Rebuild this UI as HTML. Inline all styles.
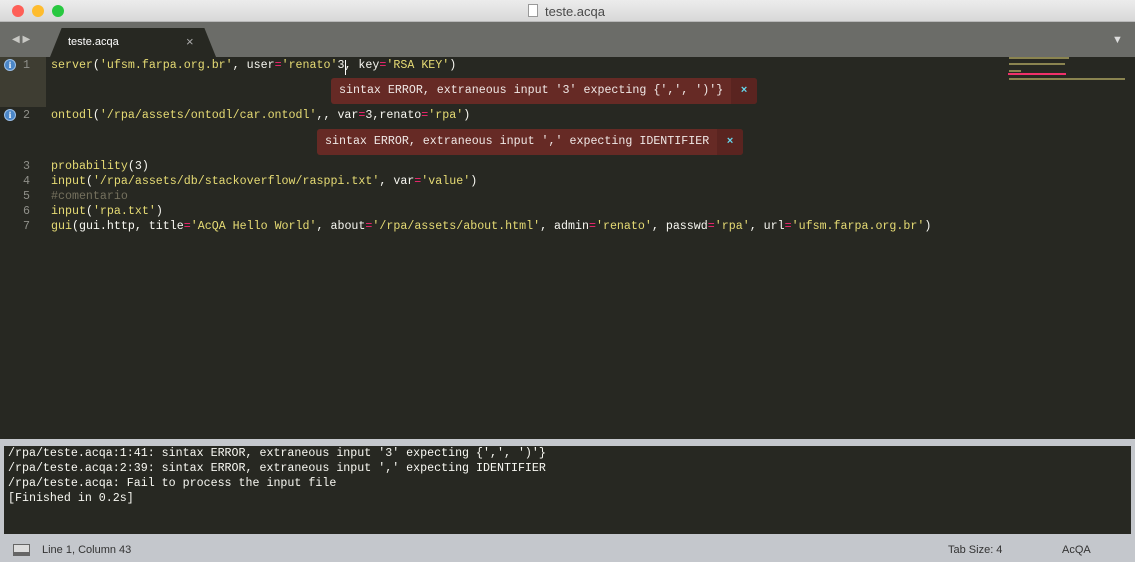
<!DOCTYPE html>
<html><head><meta charset="utf-8"><style>
*{margin:0;padding:0;box-sizing:border-box}
body{width:1135px;height:562px;overflow:hidden;background:#272822;font-family:"Liberation Sans",sans-serif;position:relative}
.mono{font-family:"Liberation Mono",monospace;font-size:11.65px;white-space:pre}
.a{position:absolute}
.y{color:#e6db74}.w{color:#f8f8f2}.p{color:#f92672}.c{color:#75715e}.n{color:#90908a}
.ph{position:absolute;height:26px;background:#662a25;border-radius:3px;color:#f0e8e6;line-height:26px;padding-left:8px}
.ph .x{position:absolute;right:0;top:0;width:26px;height:26px;background:#5a2420;color:#66d9ef;text-align:center;font-weight:bold;font-size:11px;border-radius:0 3px 3px 0}
.info{position:absolute;left:4px;width:12px;height:12px;border-radius:50%;background:#4a86c8;border:1px solid #9cc0e8;color:#fff;font:bold 9px "Liberation Serif",serif;text-align:center;line-height:10px}
</style></head><body>
<div class="a" style="left:0;top:0;width:1135px;height:22px;background:linear-gradient(#ececec,#d8d8d8);border-bottom:1px solid #b8b8b8"></div>
<div class="a" style="left:12px;top:5px;width:12px;height:12px;border-radius:50%;background:#fe5f57"></div>
<div class="a" style="left:32px;top:5px;width:12px;height:12px;border-radius:50%;background:#febc2e"></div>
<div class="a" style="left:52px;top:5px;width:12px;height:12px;border-radius:50%;background:#28c840"></div>
<div class="a" style="left:528px;top:4px;width:10px;height:13px;background:#fff;border:1px solid #999"></div>
<div class="a" style="left:545px;top:4px;font-size:13px;color:#4a4a4a">teste.acqa</div>
<div class="a" style="left:0;top:22px;width:1135px;height:35px;background:#6b6c68"></div>
<div class="a" style="left:12px;top:34px;color:#c8c8c4;font-size:10px">◀ ▶</div>
<div class="a" style="left:50px;top:28px;width:166px;height:29px;background:#272822;clip-path:polygon(7% 0,93% 0,100% 100%,0 100%)"></div>
<div class="a" style="left:68px;top:36px;color:#fff;font-size:11px">teste.acqa</div>
<div class="a" style="left:186px;top:34px;color:#aaa;font-size:13px">×</div>
<div class="a" style="left:1112px;top:34px;color:#ddd;font-size:11px">▼</div>
<div class="a" style="left:0;top:57px;width:46px;height:50px;background:#3e3d32"></div>
<div class="info" style="top:59px">i</div><div class="info" style="top:109px">i</div>
<div class="a mono n" style="left:23px;top:58px;line-height:15px">1</div>
<div class="a mono n" style="left:23px;top:108px;line-height:15px">2</div>
<div class="a mono n" style="left:23px;top:159px;line-height:15px">3
4
5
6
7</div>
<div class="a mono" style="left:51px;top:58px;line-height:15px"><span class="y">server</span><span class="w">(</span><span class="y">'ufsm.farpa.org.br'</span><span class="w">, user</span><span class="p">=</span><span class="y">'renato'</span><span class="w">3, key</span><span class="p">=</span><span class="y">'RSA KEY'</span><span class="w">)</span></div>
<div class="a" style="left:345px;top:60px;width:1px;height:15px;background:#fff"></div>
<div class="a mono" style="left:51px;top:108px;line-height:15px"><span class="y">ontodl</span><span class="w">(</span><span class="y">'/rpa/assets/ontodl/car.ontodl'</span><span class="w">,, var</span><span class="p">=</span><span class="w">3,renato</span><span class="p">=</span><span class="y">'rpa'</span><span class="w">)</span></div>
<div class="ph mono" style="left:331px;top:78px;width:426px">sintax ERROR, extraneous input '3' expecting {',', ')'}<span class="x">×</span></div>
<div class="ph mono" style="left:317px;top:129px;width:426px">sintax ERROR, extraneous input ',' expecting IDENTIFIER<span class="x">×</span></div>
<div class="a mono" style="left:51px;top:159px;line-height:15px"><span class="y">probability</span><span class="w">(3)</span>
<span class="y">input</span><span class="w">(</span><span class="y">'/rpa/assets/db/stackoverflow/rasppi.txt'</span><span class="w">, var</span><span class="p">=</span><span class="y">'value'</span><span class="w">)</span>
<span class="c">#comentario</span>
<span class="y">input</span><span class="w">(</span><span class="y">'rpa.txt'</span><span class="w">)</span>
<span class="y">gui</span><span class="w">(gui.http, title</span><span class="p">=</span><span class="y">'AcQA Hello World'</span><span class="w">, about</span><span class="p">=</span><span class="y">'/rpa/assets/about.html'</span><span class="w">, admin</span><span class="p">=</span><span class="y">'renato'</span><span class="w">, passwd</span><span class="p">=</span><span class="y">'rpa'</span><span class="w">, url</span><span class="p">=</span><span class="y">'ufsm.farpa.org.br'</span><span class="w">)</span></div>
<div class="a" style="left:1009px;top:57px;width:60px;height:2px;background:#8a8450"></div>
<div class="a" style="left:1009px;top:63px;width:56px;height:2px;background:#8a8450"></div>
<div class="a" style="left:1009px;top:70px;width:12px;height:2px;background:#8a8450"></div>
<div class="a" style="left:1008px;top:73px;width:58px;height:2px;background:#f0306a"></div>
<div class="a" style="left:1009px;top:78px;width:116px;height:2px;background:#8a8450"></div>
<div class="a" style="left:0;top:439px;width:1135px;height:95px;background:#c4c7cc"></div>
<div class="a" style="left:4px;top:446px;width:1127px;height:88px;background:#272822"></div>
<div class="a mono" style="left:8px;top:446px;line-height:15px;color:#f8f8f2">/rpa/teste.acqa:1:41: sintax ERROR, extraneous input '3' expecting {',', ')'}
/rpa/teste.acqa:2:39: sintax ERROR, extraneous input ',' expecting IDENTIFIER
/rpa/teste.acqa: Fail to process the input file
[Finished in 0.2s]</div>
<div class="a" style="left:0;top:534px;width:1135px;height:28px;background:#c4c7cc"></div>
<div class="a" style="left:13px;top:544px;width:17px;height:12px;border:1px solid #666;border-bottom:4px solid #666;background:#ddd"></div>
<div class="a" style="left:42px;top:544px;font-size:11px;color:#333">Line 1, Column 43</div>
<div class="a" style="left:948px;top:544px;font-size:11px;color:#333">Tab Size: 4</div>
<div class="a" style="left:1062px;top:544px;font-size:11px;color:#333">AcQA</div>
</body></html>
